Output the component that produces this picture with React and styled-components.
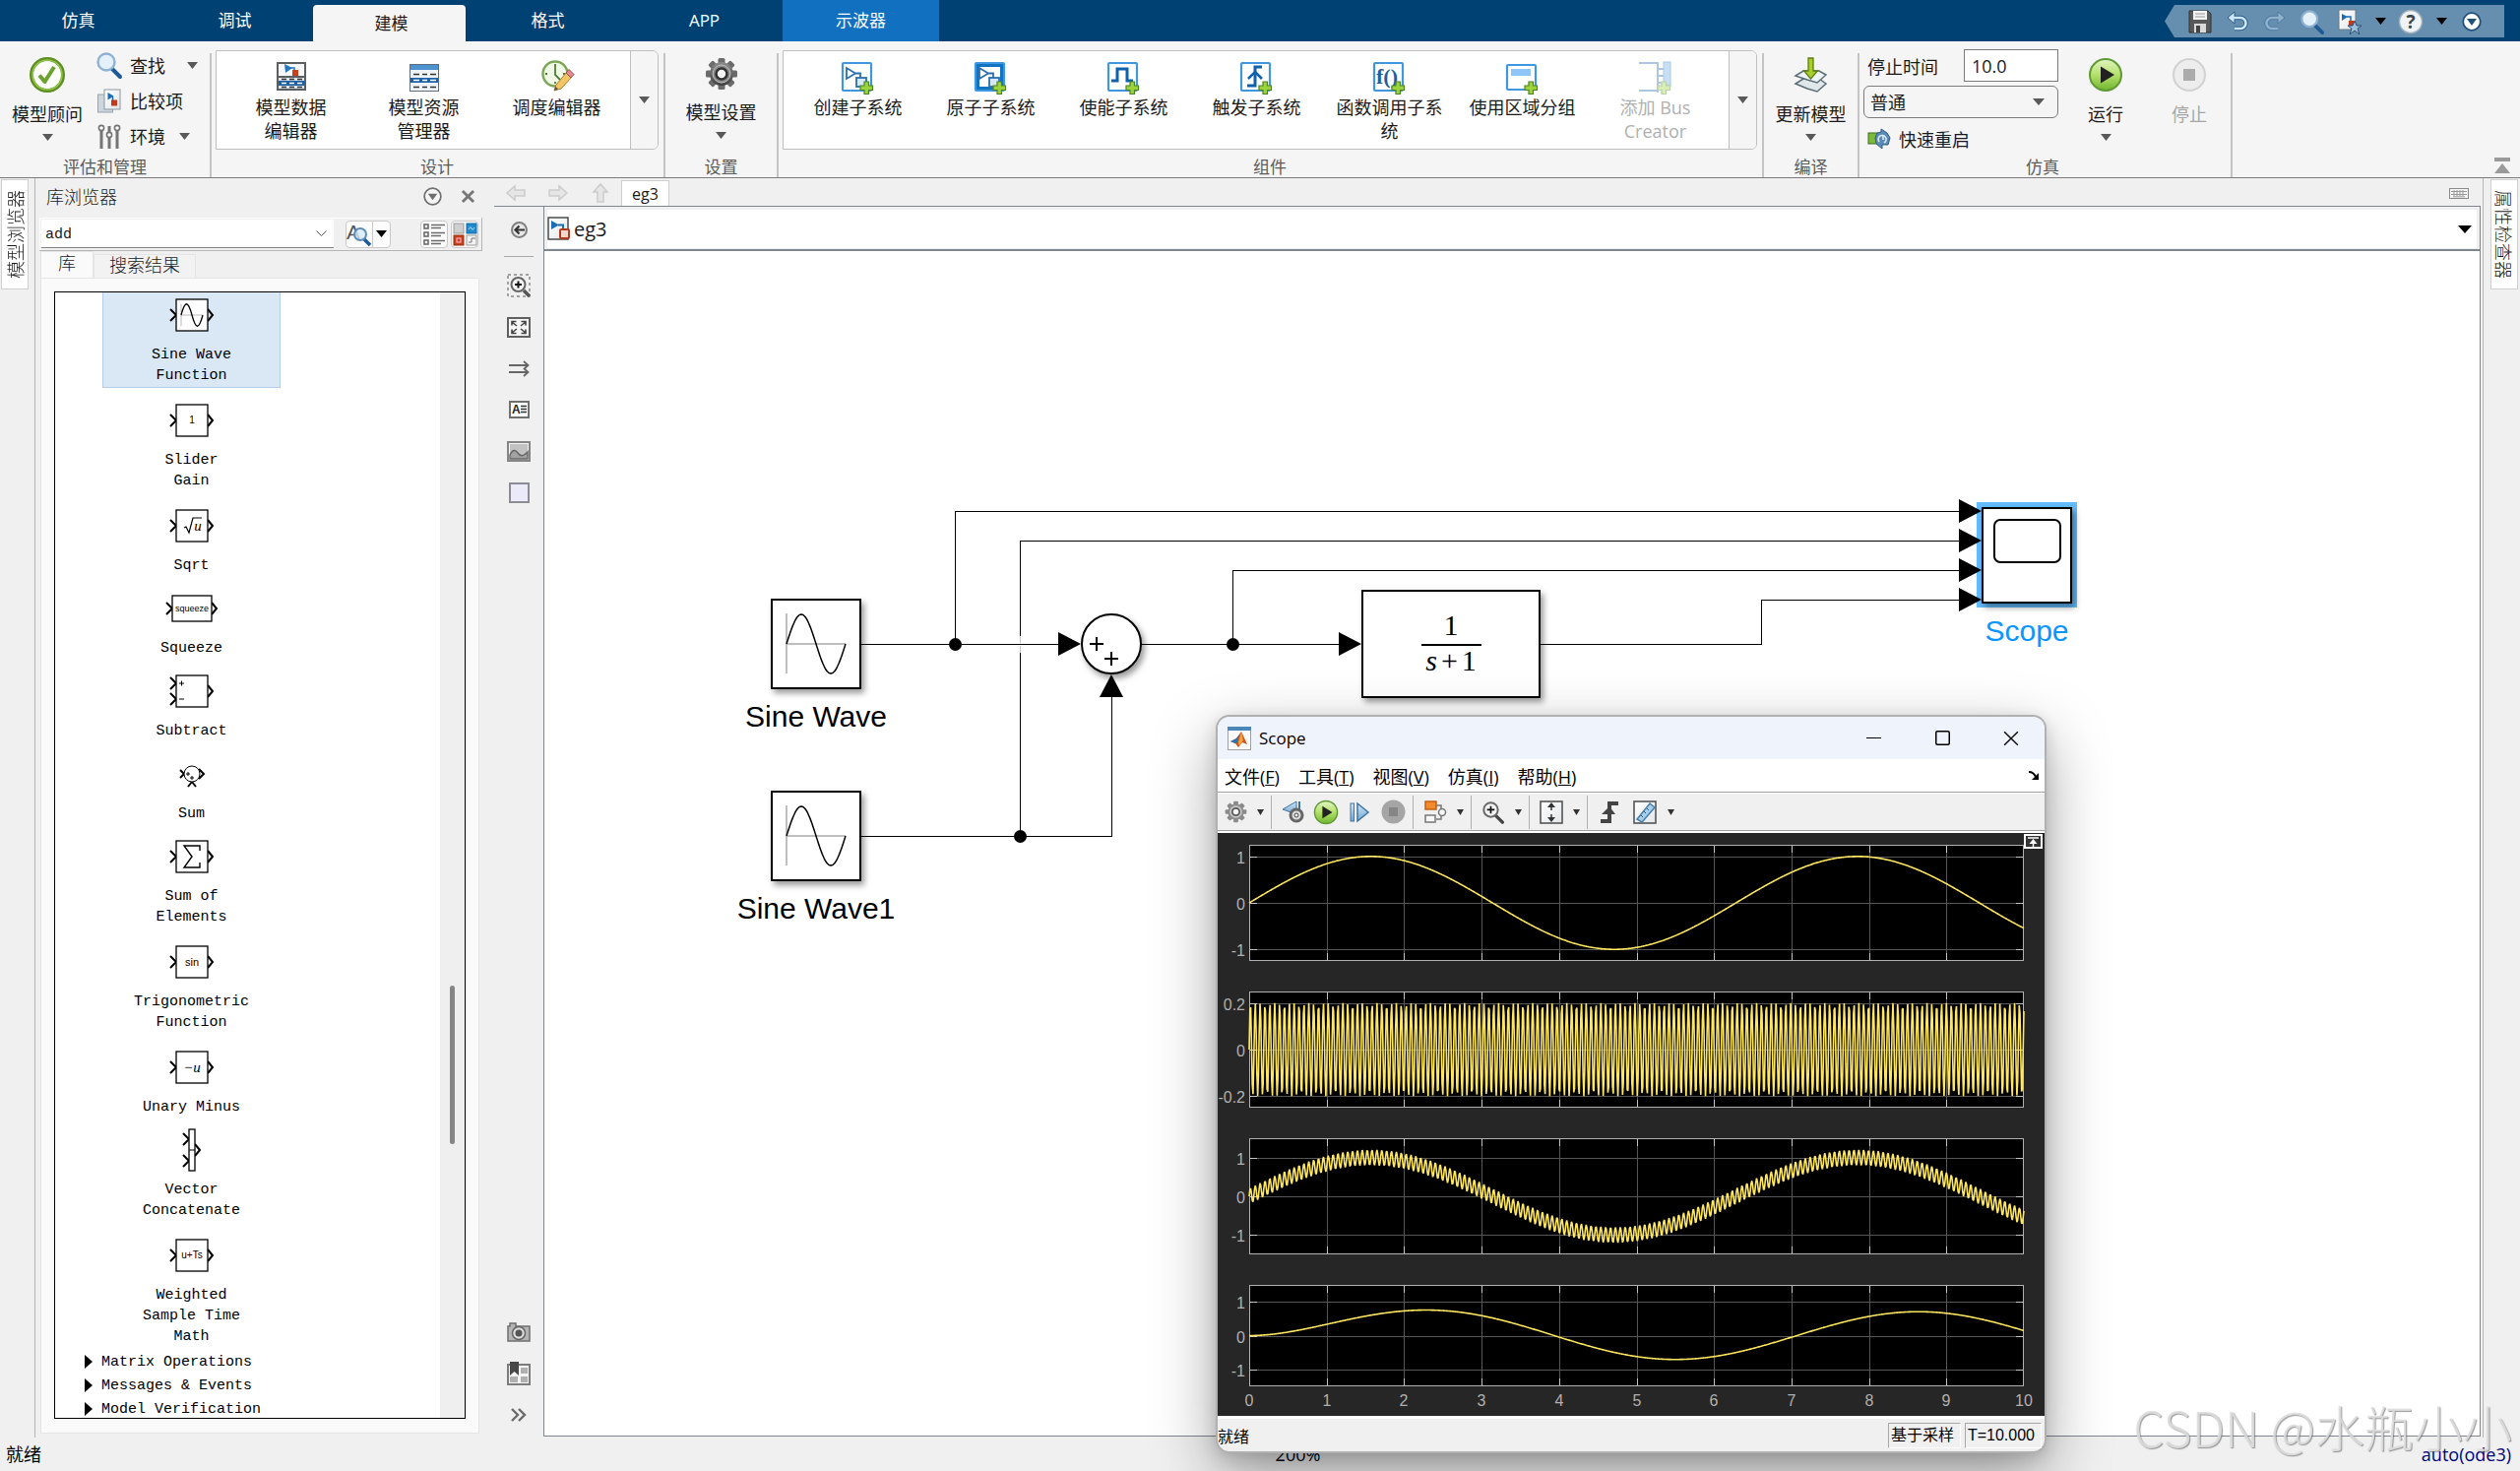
import React from "react";
import styled, { createGlobalStyle, css } from "styled-components";

const UI = `"Open Sans", "Noto Sans CJK SC", sans-serif`;
const SONG = `"Liberation Mono", "Noto Sans CJK SC", monospace`;
const ARIAL = `"Liberation Sans", "Noto Sans CJK SC", sans-serif`;

const Global = createGlobalStyle`
  *, *::before, *::after { box-sizing: border-box; }
  body { margin: 0; background: #f0f0f0; font-family: ${UI}; color: #1a1a1a; }
  button, input, select { font: inherit; color: inherit; margin: 0; }
  button { background: none; border: 0; padding: 0; cursor: default; }
  svg { display: block; flex: none; overflow: visible; }
`;

const App_ = styled.div`
  display: flex;
  flex-direction: column;
  min-height: 100vh;
  overflow: hidden;
  position: relative;
`;

/* ---------- title strip ---------- */
const TitleBar = styled.header`
  display: flex;
  height: 42px;
  background: #004173;
`;
const TitleTabs = styled.nav`
  display: flex;
  flex: 1;
`;
const TitleTab = styled.button`
  width: 159px;
  color: #fff;
  font-size: 17px;
  line-height: 42px;
  ${(p) => p.$active && css`
    background: #f5f5f5;
    color: #1a1a1a;
    width: 155px;
    margin: 5px 4px 0 0;
    padding-left: 4px;
    line-height: 32px;
    border-radius: 4px 4px 0 0;
  `}
  ${(p) => p.$context && css`background: #1170bf;`}
`;
const QuickBar = styled.div`
  display: flex;
  align-items: center;
  align-self: flex-start;
  height: 33px;
  margin: 5px 16px 0 0;
  padding: 0 14px 0 17px;
  background: #668eaf;
  clip-path: polygon(0 50%, 10px 0, 100% 0, 100% 100%, 10px 100%);
`;
const QuickButton = styled.button`
  display: flex;
  justify-content: center;
  width: ${(p) => (p.$narrow ? 24 : 38)}px;
`;

/* ---------- ribbon ---------- */
const Ribbon = styled.section`
  display: flex;
  height: 139px;
  background: #f5f5f5;
  border-bottom: 1px solid #7c7a7d;
`;
const Group = styled.div`
  display: flex;
  flex-direction: column;
  padding: ${(p) => p.$pad || "0"};
`;
const GroupBody = styled.div`
  display: flex;
  flex: 1;
  align-items: flex-start;
`;
const GroupLabel = styled.div`
  height: 20px;
  line-height: 20px;
  font-size: 17px;
  color: #5c5c5c;
  text-align: center;
`;
const Divider = styled.div`
  width: 2px;
  margin-top: 12px;
  background: #c4c4c4;
`;
const LargeButton = styled.button`
  display: flex;
  flex-direction: column;
  align-items: center;
  width: ${(p) => p.$w}px;
  padding-top: 16px;
  font-size: 18px;
  line-height: 24px;
  color: ${(p) => (p.disabled ? "#a6a6a6" : "#1a1a1a")};
  svg + span { margin: 10px 0 8px; }
`;
const SmallColumn = styled.div`
  display: flex;
  flex-direction: column;
  width: 117px;
  padding: 6px 0 0 2px;
`;
const SmallButton = styled.button`
  display: flex;
  align-items: center;
  gap: 8px;
  height: 36px;
  font-size: 18px;
  svg:first-child { width: 26px; }
  span + svg { margin-left: ${(p) => p.$gap || 6}px; }
`;
const Gallery = styled.div`
  display: flex;
  height: 101px;
  margin-top: 9px;
  padding-left: 8px;
  background: #fff;
  border: 1px solid #bfbfbf;
  border-radius: 0 6px 6px 0;
`;
const GalleryItem = styled.button`
  display: flex;
  flex-direction: column;
  align-items: center;
  width: 135px;
  padding: 9px 8px 0;
  font-size: 18px;
  line-height: 24px;
  white-space: pre-line;
  color: ${(p) => (p.disabled ? "#b0b0b0" : "#1a1a1a")};
`;
const GalleryMore = styled.button`
  display: flex;
  align-items: center;
  justify-content: center;
  width: 28px;
  margin-left: 7px;
  background: #f5f5f5;
  border-left: 1px solid #bfbfbf;
  border-radius: 0 5px 5px 0;
`;
const Fields = styled.div`
  display: flex;
  flex-direction: column;
  gap: 4px;
  width: 202px;
  padding: 8px 0 0 4px;
  font-size: 18px;
`;
const FieldRow = styled.div`
  display: flex;
  align-items: center;
  gap: 8px;
  height: 33px;
  padding-left: 4px;
  justify-content: ${(p) => (p.$spread ? "space-between" : "flex-start")};
`;
const StopInput = styled.input`
  width: 96px;
  height: 33px;
  padding: 0 7px;
  border: 1px solid #7c7a7d;
  background: #fff;
`;
const ModeBox = styled.div`
  display: grid;
  align-items: center;
  select, svg { grid-area: 1 / 1; }
  select {
    appearance: none;
    height: 33px;
    padding: 0 6px;
    border: 1px solid #7c7a7d;
    border-radius: 6px;
    background: #f5f5f5;
  }
  svg { justify-self: end; margin-right: 14px; pointer-events: none; }
`;
const RibbonEnd = styled.div`
  display: flex;
  flex: 1;
  justify-content: flex-end;
  align-items: flex-end;
  padding: 0 10px 4px 0;
`;

/* ---------- docked body ---------- */
const Main = styled.main`
  display: flex;
  flex: 1;
`;
const SideStrip = styled.aside`
  width: ${(p) => (p.$right ? 38 : 36)}px;
  padding: ${(p) => (p.$right ? "1px 2px 0 7px" : "1px 7px 0 1px")};
  border: solid #b5b5b5;
  border-width: ${(p) => (p.$right ? "0 0 0 1px" : "0 1px 0 0")};
`;
const SideTab = styled.button`
  display: flex;
  align-items: center;
  justify-content: center;
  width: 28px;
  height: 112px;
  background: #fff;
  border: 1px solid #cfcfcf;
  font-family: ${SONG};
  font-size: 18px;
  font-weight: 300;
  writing-mode: vertical-rl;
  text-orientation: sideways;
  transform: ${(p) => (p.$flip ? "rotate(180deg)" : "none")};
`;
const Library = styled.section`
  display: flex;
  flex-direction: column;
  width: 466px;
  padding: 0 12px 4px 4px;
  font-family: ${SONG};
`;
const LibraryHead = styled.div`
  display: flex;
  align-items: center;
  gap: 20px;
  height: 40px;
  padding: 0 8px 4px 7px;
  h2 { flex: 1; margin: 0; font-size: 18px; font-weight: 300; }
`;
const SearchRow = styled.div`
  display: flex;
  align-items: center;
  height: 34px;
  padding: 0 3px 0 2px;
  border: 1px solid #b5b5b5;
  border-width: 0 1px 1px 0;
  box-shadow: inset 1px 1px #fff;
`;
const Combo = styled.div`
  display: flex;
  align-items: center;
  flex: 1;
  height: 29px;
  padding-right: 7px;
  background: #fff;
  border-bottom: 1px solid #858585;
  input {
    flex: 1;
    min-width: 0;
    border: 0;
    padding: 3px 4px 0;
    font-size: 15px;
    background: none;
  }
`;
const FramedButton = styled.button`
  display: flex;
  align-items: center;
  justify-content: center;
  width: ${(p) => p.$w}px;
  height: 28px;
  margin-left: ${(p) => p.$ml}px;
  background: #fcfcfc;
  border: 1px solid #c9c9c9;
  border-radius: ${(p) => p.$r || "4px"};
`;
const LibTabs = styled.div`
  display: flex;
  align-items: flex-end;
  height: 27px;
  padding-left: 1px;
  font-size: 18px;
  font-weight: 300;
  button {
    height: 24px;
    line-height: 24px;
    padding: 0 15px;
    border: 1px solid #e5e5e5;
    border-bottom: 0;
    background: #f2f2f2;
  }
  button[aria-selected="true"] { height: 27px; background: #fafafa; padding: 0 17px; }
`;
const LibBody = styled.div`
  display: flex;
  flex: 1;
  contain: size;
  padding: 13px 13px 14px 13px;
  margin: 0 3px 0 1px;
  background: #fafafa;
  border: 1px solid #e5e5e5;
`;
const LibList = styled.div`
  display: flex;
  flex: 1;
  border: 1px solid #000;
  background: #fff;
  overflow: hidden;
`;
const LibItems = styled.div`
  flex: 1;
  margin-top: -10px;
`;
const LibItem = styled.button`
  display: flex;
  flex-direction: column;
  align-items: center;
  gap: 7px;
  width: 181px;
  height: ${(p) => ({ 1: 84, 2: 107, 3: 129 })[p.$lines]}px;
  margin-left: 48px;
  padding-top: 10px;
  font-size: 15px;
  line-height: 21px;
  white-space: pre-line;
  color: #000;
  ${(p) => p.$selected && css`
    background: #dae8f5;
    box-shadow: inset 0 0 0 1px #b5cfe8;
  `}
`;
const LibNode = styled.button`
  display: flex;
  align-items: center;
  gap: 9px;
  height: 24px;
  margin-left: 30px;
  font-size: 15px;
  color: #000;
`;
const ScrollTrack = styled.div`
  width: 25px;
  padding: 704px 9px 0 10px;
  background: #efefef;
`;
const ScrollThumb = styled.div`
  width: 5px;
  height: 161px;
  border-radius: 3px;
  background: #858585;
`;

const Editor = styled.section`
  display: flex;
  flex-direction: column;
  flex: 1;
  margin-right: 2px;
`;
const NavRow = styled.div`
  display: flex;
  align-items: flex-end;
  height: 29px;
  border-bottom: 1px solid #808690;
`;
const NavButton = styled.button`
  display: flex;
  align-items: center;
  justify-content: center;
  width: 43px;
  height: 26px;
`;
const DocTab = styled.button`
  width: 49px;
  height: 26px;
  background: #fff;
  border: 1px solid #cfcfcf;
  border-bottom: 0;
  font-size: 16px;
  line-height: 26px;
`;
const KeyboardButton = styled.button`
  margin: 0 12px 7px auto;
`;
const EditorBody = styled.div`
  display: flex;
  flex: 1;
`;
const Palette = styled.div`
  display: flex;
  flex-direction: column;
  align-items: center;
  width: 50px;
  padding: 2px 0;
  hr { width: 30px; height: 1px; margin: 6px 0 8px; border: 0; background: #a8a8a8; }
`;
const PaletteButton = styled.button`
  display: flex;
  align-items: center;
  justify-content: center;
  width: 42px;
  height: 42px;
`;
const Spacer = styled.div`flex: 1;`;
const CanvasFrame = styled.div`
  display: flex;
  flex-direction: column;
  flex: 1;
  margin-bottom: 1px;
  border: 1px solid #808690;
  border-top: 0;
`;
const AddressBar = styled.div`
  height: 45px;
  padding: 3px;
  background: #f0f0f0;
  border-bottom: 2px solid #808690;
`;
const Address = styled.div`
  display: flex;
  align-items: center;
  gap: 3px;
  height: 39px;
  padding-right: 5px;
  background: #fff;
  font-size: 20px;
  span { flex: 1; }
`;
const Canvas = styled.div`
  flex: 1;
  position: relative;
  background: #fff;
`;

/* ---------- status bar and watermark ---------- */
const StatusBar = styled.footer`
  display: grid;
  grid-template-columns: 1fr auto 1fr;
  height: 34px;
  line-height: 34px;
  padding: 0 9px 0 6px;
  font-size: 18px;
  color: #000;
  span:nth-child(2) { margin-left: 80px; }
  a { justify-self: end; color: #000080; text-decoration: none; }
`;
const Watermark = styled.div`
  position: absolute;
  right: 8px;
  bottom: 9px;
  font: 300 50px/74px "Noto Sans CJK SC", sans-serif;
  color: rgba(222, 222, 222, 0.9);
  text-shadow: 1px 1px 1px rgba(90, 90, 90, 0.6);
  white-space: nowrap;
  pointer-events: none;
`;

/* ---------- scope window ---------- */
const Window = styled.section`
  position: absolute;
  left: 682px;
  top: 471px;
  z-index: 2;
  width: 844px;
  border: 2px solid #b0b0b0;
  border-radius: 14px;
  background: #f0f0f0;
  overflow: hidden;
  box-shadow: 0 4px 16px rgba(0, 0, 0, 0.14), 0 24px 64px rgba(0, 0, 0, 0.36);
`;
const WinTitle = styled.div`
  display: flex;
  align-items: center;
  height: 43px;
  padding: 0 9px 0 10px;
  background: #eff3fb;
  font-size: 17px;
  h3 { flex: 1; margin: 0 0 0 8px; font: inherit; color: #000; }
`;
const WinButton = styled.button`
  display: flex;
  justify-content: center;
  width: 70px;
  &:last-child { margin-right: -10px; }
`;
const MenuBar = styled.div`
  display: flex;
  align-items: center;
  gap: 19px;
  height: 34px;
  padding: 0 6px 0 7px;
  background: #fff;
  border-bottom: 1px solid #a0a0a0;
  font-size: 18px;
  color: #000;
  svg { margin-left: auto; }
`;
const WinTools = styled.div`
  display: flex;
  align-items: center;
  height: 41px;
  padding-left: 2px;
  border-bottom: 2px solid #fff;
  box-shadow: inset 0 1px #fff, inset 0 -1px #a0a0a0;
`;
const Tool = styled.button`
  display: flex;
  align-items: center;
  justify-content: center;
  width: ${(p) => p.$w || 34}px;
  height: 32px;
`;
const ToolSep = styled.div`
  width: 1px;
  height: 34px;
  margin: 0 5px 0 3px;
  background: #b0b0b0;
`;
const Plots = styled.div`
  position: relative;
  display: flex;
  flex-direction: column;
  gap: 31px;
  padding: 12px 21px 30px 32px;
  background: #262626;
`;
const MaxAxes = styled.button`
  position: absolute;
  right: 2px;
  top: 1px;
`;
const WinStatus = styled.div`
  display: flex;
  align-items: center;
  gap: 4px;
  height: 36px;
  padding-right: 3px;
  border-top: 3px solid #fff;
  font: 16px ${ARIAL};
  color: #000;
  span:first-child { flex: 1; }
`;
const StatusCell = styled.span`
  height: 26px;
  line-height: 24px;
  padding: 0 6px 0 2px;
  border: 1px solid;
  border-color: #a8a8a8 #fff #fff #a8a8a8;
`;

/* ---------- shared drawings ---------- */
const Hidden = styled.svg`
  position: absolute;
`;
const Defs = () => (
  <Hidden width="0" height="0" aria-hidden="true">
    <defs>
      <linearGradient id="gGreen" x1="0" y1="0" x2="0" y2="1"><stop offset="0" stopColor="#e2f5c4" /><stop offset=".5" stopColor="#b4e06a" /><stop offset="1" stopColor="#6fb52e" /></linearGradient>
      <linearGradient id="gDark" x1="0" y1="0" x2="0" y2="1"><stop offset="0" stopColor="#8c8c8c" /><stop offset="1" stopColor="#404040" /></linearGradient>
      <linearGradient id="gBlue" x1="0" y1="0" x2="0" y2="1"><stop offset="0" stopColor="#d3e8f7" /><stop offset="1" stopColor="#6fa6d2" /></linearGradient>
      <linearGradient id="gPage" x1="0" y1="0" x2="1" y2="1"><stop offset="0" stopColor="#ffffff" /><stop offset="1" stopColor="#e2e7eb" /></linearGradient>
    </defs>
  </Hidden>
);
const Caret = ({ w = 11, h = 7, c = "#595959" }) => (
  <svg width={w} height={h} viewBox="0 0 10 6" preserveAspectRatio="none"><path d="M0 0H10L5 6Z" fill={c} /></svg>
);
const Lens = ({ size = 26, dark }) => (
  <svg width={size} height={size} viewBox="0 0 26 26">
    <path d="M16 17L24 25" stroke={dark ? "#454545" : "#1d5a96"} strokeWidth="4" strokeLinecap="round" />
    <circle cx="10" cy="10" r="8.500" fill={dark ? "#f4f4f4" : "#e4f1fb"} stroke={dark ? "#6b6b6b" : "#8eb2d3"} strokeWidth="2.400" />
    {dark && <path d="M5.500 10h9M10 5.500v9" stroke="#111" strokeWidth="2" />}
  </svg>
);
const Gear = ({ size = 34, light }) => (
  <svg width={size} height={size} viewBox="-17 -17 34 34">
    {[0, 45, 90, 135, 180, 225, 270, 315].map((a) => (
      <rect key={a} x="-3.500" y="-16" width="7" height="8" rx="1.500" fill={light ? "#8a8a8a" : "#6b6b6b"} transform={`rotate(${a})`} />
    ))}
    <circle r="12" fill={light ? "#8a8a8a" : "url(#gDark)"} />
    <circle r="9" fill={light ? "#c9c9c9" : "#8b8b8b"} stroke="#bdbdbd" strokeWidth="1" />
    <circle r="5.500" fill="#f4f4f4" stroke={light ? "#5c5c5c" : "#333"} strokeWidth="2.600" />
  </svg>
);
const CheckIcon = () => (
  <svg width="36" height="36" viewBox="0 0 36 36">
    <circle cx="18" cy="18" r="16" fill="#fcfdf8" stroke="#5d8c22" strokeWidth="4" />
    <circle cx="18" cy="18" r="15" fill="none" stroke="#93c94b" strokeWidth="1.500" />
    <path d="M10 18.500L15.500 25L25 10" fill="none" stroke="#6aa12f" strokeWidth="4" strokeLinejoin="round" />
  </svg>
);
const CompareIcon = () => (
  <svg width="25" height="25" viewBox="0 0 25 25">
    <rect x="1" y="6" width="15" height="18" fill="#cdd6dc" stroke="#96a2ac" />
    <rect x="7.500" y="1" width="16" height="20" fill="url(#gPage)" stroke="#8c979f" />
    <path d="M11 4l6 3.500l-6 4z" fill="#1c6bb5" /><path d="M16 8v4" stroke="#1c6bb5" strokeWidth="1.500" />
    <rect x="14.500" y="11.500" width="6" height="6" fill="#c2391b" />
  </svg>
);
const SlidersIcon = () => (
  <svg width="24" height="25" viewBox="0 0 24 25" fill="#fff" stroke="#757575">
    <path d="M4 7V25M12 13V25M20 7V25M12 2V9" strokeWidth="3" />
    <circle cx="4" cy="4" r="2.600" strokeWidth="1.600" /><circle cx="12" cy="11" r="2.600" strokeWidth="1.600" /><circle cx="20" cy="4" r="2.600" strokeWidth="1.600" />
  </svg>
);
const DataEditorIcon = () => (
  <svg width="36" height="36" viewBox="0 0 36 36">
    <rect x="3" y="2" width="30" height="29" fill="#5a5f63" />
    <rect x="5" y="4" width="26" height="12" fill="#f6f8fa" />
    <path d="M11 4l8 4l-7 5z" fill="#2277c0" /><path d="M17 8h4v3" stroke="#2277c0" fill="none" strokeWidth="1.500" /><rect x="19" y="10" width="6" height="6" fill="#c8401e" />
    <rect x="5" y="18" width="26" height="11" fill="#dfe6eb" />
    <rect x="5" y="21" width="26" height="5" fill="#1d62a8" />
    <path d="M8 19.500h5m3 0h5m3 0h5M8 27.500h5m3 0h5m3 0h5" stroke="#333" strokeWidth="1.300" />
    <path d="M8 23.500h5m3 0h5m3 0h5" stroke="#fff" strokeWidth="1.500" />
  </svg>
);
const ResourceIcon = () => (
  <svg width="36" height="36" viewBox="0 0 36 36">
    <rect x="3.500" y="4.500" width="29" height="27" fill="#eef3f7" stroke="#5b6d7c" />
    <rect x="4" y="5" width="28" height="5" fill="#4d93d0" />
    <rect x="4" y="18" width="28" height="5" fill="#1d62a8" />
    <path d="M7 14.500h6m3 0h5m3 0h6M7 27.500h6m3 0h5m3 0h6" stroke="#333" strokeWidth="1.600" />
    <path d="M7 20.500h6m3 0h5m3 0h6" stroke="#fff" strokeWidth="1.600" />
  </svg>
);
const ScheduleIcon = () => (
  <svg width="36" height="36" viewBox="0 0 36 36">
    <circle cx="16" cy="14" r="12.500" fill="#eff9e6" stroke="#7ba757" strokeWidth="2.400" />
    <path d="M16 4v11l5 5M16 24v-2M6 14h2M24 14h2" stroke="#4f7a35" strokeWidth="1.800" fill="none" />
    <path d="M17 25L28 12L33 17L22 29L15 31Z" fill="#f3c663" stroke="#a87c2c" />
    <path d="M27 13l3-3.500l5 5l-3 3.500z" fill="#e58a90" stroke="#a34a55" /><path d="M15 31l1.500-4l2.500 2.500z" fill="#553" />
  </svg>
);
const Plus = () => (
  <path d="M24 22h4.500v4h4v4.500h-4v4h-4.500v-4h-4v-4.500h4z" fill="#9bd33c" stroke="#4d8422" strokeWidth="1.200" />
);
const subDrawings = {
  sub: <g fill="none" stroke="#2b6fae" strokeWidth="1.800"><path d="M6 8v11l9-5.500zM15 13.500h5V18" /><rect x="16" y="18" width="10" height="9" fill="#d6e8f8" /></g>,
  enable: <path d="M5 21h6V9h10v12h6" fill="none" stroke="#0e62ab" strokeWidth="3" />,
  trigger: <g fill="none" stroke="#0e62ab" strokeWidth="3"><path d="M8 26h8V7h7" /><path d="M9 19l7-7l7 7" strokeWidth="2.600" /></g>,
  func: <text x="4" y="24" fontFamily="Liberation Serif, serif" fontWeight="bold" fontSize="22" fill="#1b5f9f">f()</text>,
  region: <rect x="6" y="9" width="20" height="7" fill="#8fc6f7" />,
};
const SubIcon = ({ kind, atomic }) => (
  <svg width="36" height="36" viewBox="0 0 36 36">
    <rect x="2" y={kind === "region" ? 5 : 3} width="29" height={kind === "region" ? 25 : 28} rx="1" fill="#fff" stroke="#3f97e0" strokeWidth="2.200" />
    {atomic && <rect x="4.500" y="5.500" width="24" height="23" fill="#fff" stroke="#1173c4" strokeWidth="3" />}
    {subDrawings[kind]}
    <Plus />
  </svg>
);
const BusIcon = () => (
  <svg width="36" height="36" viewBox="0 0 36 36" opacity=".38">
    <path d="M1 3h18M1 31h18M20 2v31M20 9h7M20 16h7M20 23h7" fill="none" stroke="#2b6fae" strokeWidth="2" />
    <rect x="26" y="2" width="7" height="24" fill="#6fb0e8" stroke="#2b6fae" />
    <Plus />
  </svg>
);
const UpdateIcon = () => (
  <svg width="36" height="36" viewBox="0 0 36 36">
    <path d="M2 27l8-5h16l7 5l-9 8l-10-3z" fill="#dfe7ea" stroke="#5c6f78" strokeWidth="1.500" />
    <path d="M2 19l8-5h16l7 4l-9 8l-10-3z" fill="#eef3f5" stroke="#5c6f78" strokeWidth="1.500" />
    <path d="M15 1h5v13h4.500l-7 8l-7-8H15z" fill="#a7cf2a" stroke="#5f7d16" strokeWidth="1.300" />
  </svg>
);
const Play = ({ size = 36 }) => (
  <svg width={size} height={size} viewBox="0 0 36 36">
    <circle cx="18" cy="18" r="16" fill="url(#gGreen)" stroke="#5f9a34" strokeWidth="2" />
    <path d="M13 9.500L27 18L13 26.500Z" fill="#222" />
  </svg>
);
const StopIcon = () => (
  <svg width="36" height="36" viewBox="0 0 36 36">
    <circle cx="18" cy="18" r="16" fill="#ededed" stroke="#d2d2d2" strokeWidth="2" /><rect x="12" y="12" width="12" height="12" fill="#ababab" />
  </svg>
);
const RestartIcon = () => (
  <svg width="24" height="22" viewBox="0 0 24 22">
    <rect x="1" y="5" width="9" height="11" fill="#7cba3a" stroke="#3c6e1f" />
    <path d="M14 1l6 4l3 5l-2 7l-6 0v4l-6-5l-1-6l2-5l4-1z" fill="#5b8cb8" stroke="#315c82" /><path d="M12 14a4 4 0 1 1 5 1M16 8v4" fill="none" stroke="#dcebf6" strokeWidth="1.600" />
  </svg>
);
const SaveIcon = () => (
  <svg width="24" height="24" viewBox="0 0 24 24">
    <path d="M1 1h19l3 3v19H1z" fill="#595959" stroke="#333" /><rect x="5" y="1" width="14" height="9" fill="#f3f3f3" /><path d="M7 4h10M7 7h10" stroke="#999" />
    <rect x="6" y="14" width="12" height="9" fill="#d9d9d9" /><rect x="8" y="16" width="4" height="7" fill="#444" />
  </svg>
);
const UndoIcon = ({ redo }) => (
  <svg width="22" height="20" viewBox="0 0 22 20" opacity={redo ? 0.4 : 1}>
    <g transform={redo ? "translate(22 0) scale(-1 1)" : undefined}>
      <path d="M5 6h9a5.500 5.500 0 0 1 0 11H8" fill="none" stroke="#2a5f8e" strokeWidth="4.500" />
      <path d="M8 0L1 6l7 6z" fill="#cfe6f6" stroke="#2a5f8e" strokeWidth="1" />
      <path d="M5 6h9a5.500 5.500 0 0 1 0 11H8" fill="none" stroke="#cfe6f6" strokeWidth="2.600" />
    </g>
  </svg>
);
const FavIcon = () => (
  <svg width="24" height="26" viewBox="0 0 24 26">
    <rect x="1" y="1" width="17" height="20" fill="url(#gPage)" stroke="#6d7a85" /><path d="M4 5l6 3l-6 4z" fill="#1c6bb5" /><path d="M9 8h4v4" fill="none" stroke="#1c6bb5" strokeWidth="1.500" />
    <rect x="11" y="12" width="5" height="6" fill="#c2391b" /><path d="M17 12l2 5h5l-4 3l2 6l-5-4l-5 4l2-6l-4-3h5z" fill="#9fc1de" stroke="#2d4f74" />
  </svg>
);
const HelpIcon = () => (
  <svg width="26" height="26" viewBox="0 0 26 26"><circle cx="13" cy="13" r="11.500" fill="#f0f3f5" stroke="#9fb0bd" strokeWidth="1.500" /><text x="13" y="20" textAnchor="middle" fontFamily="Open Sans, sans-serif" fontWeight="bold" fontSize="19" fill="#3a4650">?</text></svg>
);
const CircleDown = ({ size = 20, c = "#20507c", bg = "#fff" }) => (
  <svg width={size} height={size} viewBox="0 0 20 20"><circle cx="10" cy="10" r="8.800" fill={bg} stroke={c} strokeWidth="1.800" /><path d="M5 7h10L10 14z" fill={c} /></svg>
);
const CollapseIcon = () => (
  <svg width="16" height="16" viewBox="0 0 16 16" fill="#9a9a9a"><rect width="16" height="4" /><path d="M8 6l8 10H0z" /></svg>
);
const CloseX = ({ s = 13, c = "#777", w = 3 }) => (
  <svg width={s} height={s} viewBox="0 0 14 14"><path d="M1 1L13 13M13 1L1 13" stroke={c} strokeWidth={w} /></svg>
);
const NavArrow = ({ r }) => (
  <svg width="20" height="16" viewBox="0 0 20 16"><path transform={`rotate(${r} 10 8)`} d="M9 1L1 8l8 7v-4h10V5H9z" fill="#e6e6e6" stroke="#cccccc" strokeWidth="1.500" /></svg>
);
const KeyboardIcon = () => (
  <svg width="20" height="11" viewBox="0 0 20 11"><rect x=".5" y=".5" width="19" height="10" fill="#f5f5f5" stroke="#8a8a8a" /><path d="M2 3.500h16M2 6.500h16M4 8.800h12M5 2v6M8 2v6M11 2v6M14 2v6" stroke="#999" /></svg>
);
const ModelIcon = () => (
  <svg width="24" height="25" viewBox="0 0 24 25">
    <rect x="1" y="1" width="20" height="22" fill="url(#gPage)" stroke="#4b4b4b" strokeWidth="1.500" />
    <path d="M4 4l8 4.500l-8 4.500z" fill="#1c6bb5" /><path d="M11 8.500h5v4" fill="none" stroke="#1c6bb5" strokeWidth="2" /><rect x="13" y="13" width="9" height="9" rx="1" fill="#f4d5cb" stroke="#b33a1c" strokeWidth="2" />
  </svg>
);
const SearchAIcon = () => (
  <svg width="25" height="24" viewBox="0 0 25 24">
    <text x="-1" y="17" fontFamily="Liberation Sans, sans-serif" fontSize="21" fill="#555">A</text>
    <path d="M17 17l6 6" stroke="#1d5a96" strokeWidth="3.500" /><circle cx="13" cy="12" r="6" fill="#d8eaf8cc" stroke="#5b8dba" strokeWidth="2" />
  </svg>
);
const ListIcon = () => (
  <svg width="22" height="22" viewBox="0 0 22 22" fill="none" stroke="#6b6b6b" strokeWidth="1.600">
    {[1, 9, 17].map((y) => <g key={y}><rect x="1" y={y} width="4" height="4" /><path d={`M8 ${y + 0.5}h14M8 ${y + 3.5}h10`} /></g>)}
  </svg>
);
const GridIcon = () => (
  <svg width="25" height="24" viewBox="0 0 25 24">
    <rect x="1" y="1" width="10" height="10" fill="#cfcfcf" stroke="#999" /><rect x="14" y="1" width="10" height="10" fill="#1e8bd0" stroke="#1268a3" /><path d="M16 7q2-4 3-1t3-1" stroke="#bfe3fa" fill="none" />
    <rect x="1" y="13" width="10" height="10" fill="#c7411a" stroke="#96300f" /><rect x="4" y="16" width="4" height="4" fill="none" stroke="#fbd" />
    <rect x="14" y="13" width="10" height="10" fill="#f3f3f3" stroke="#999" /><path d="M16 20h3v-4h4" stroke="#777" fill="none" />
  </svg>
);

const paletteTop = [
  ["缩放", <svg width="25" height="25" viewBox="0 0 25 25"><rect x="1" y="1" width="22" height="22" fill="none" stroke="#888" strokeWidth="1.500" strokeDasharray="3 3" /><path d="M17 17l6 6" stroke="#555" strokeWidth="3.500" /><circle cx="11.500" cy="11" r="7" fill="#f4f4f4" stroke="#666" strokeWidth="2" /><path d="M8 11h7M11.500 7.500v7" stroke="#111" strokeWidth="2" /></svg>],
  ["适应视图", <svg width="24" height="21" viewBox="0 0 24 21"><rect x="1" y="1" width="22" height="19" fill="#f6f6f6" stroke="#606060" strokeWidth="2" /><path d="M10 9L5 5M5 8.500V4.500h4.500M14 9l5-4M14.500 4.500H19v4M10 12l-5 4M5 12.500v4h4.500M14 12l5 4M14.500 16.500H19v-4" fill="none" stroke="#444" strokeWidth="1.600" /></svg>],
  ["示例时间", <svg width="21" height="15" viewBox="0 0 21 15" fill="none" stroke="#666" strokeWidth="1.800"><path d="M0 4h19M15 0l4.500 4L15 8M0 11h19M15 7l4.500 4L15 15" /></svg>],
  ["注释", <svg width="21" height="18" viewBox="0 0 21 18"><rect x="1" y="1" width="19" height="16" fill="#fff" stroke="#707070" strokeWidth="2" /><text x="3" y="13" fontFamily="Liberation Sans, sans-serif" fontWeight="bold" fontSize="12" fill="#222">A</text><path d="M12 5.500h6M12 8.500h6M12 11.500h6" stroke="#333" strokeWidth="1.300" /></svg>],
  ["图像", <svg width="24" height="21" viewBox="0 0 24 21"><rect x="1" y="1" width="22" height="19" fill="#f4f4f4" stroke="#858585" strokeWidth="2" /><rect x="3" y="3" width="18" height="15" fill="#c2c2c2" /><path d="M3 14q4-8 8-2t10-1v7H3z" fill="#a2a2a2" stroke="#666" strokeWidth="1.400" /></svg>],
  ["区域", <svg width="21" height="21" viewBox="0 0 21 21"><rect x="1" y="1" width="19" height="19" fill="#eaeaf8" stroke="#8c8c96" strokeWidth="2" /></svg>],
];
const paletteBottom = [
  ["截图", <svg width="24" height="20" viewBox="0 0 24 20"><path d="M1 4h2V1h6v3h14v15H1z" fill="#b5b5b5" stroke="#6f6f6f" strokeWidth="1.500" /><circle cx="12" cy="11" r="6.500" fill="#ddd" stroke="#666" strokeWidth="1.500" /><circle cx="12" cy="11" r="3.500" fill="#555" /></svg>],
  ["视图标记", <svg width="24" height="24" viewBox="0 0 24 24"><rect x="1" y="3" width="22" height="20" fill="#f4f4f4" stroke="#7c7c7c" strokeWidth="2" /><rect x="14" y="6" width="7" height="6" fill="#b0b0b0" /><rect x="14" y="15" width="7" height="6" fill="#b0b0b0" /><rect x="3" y="15" width="8" height="6" fill="#b0b0b0" /><path d="M3 0h9v14l-4.500-4L3 14z" fill="#474747" /></svg>],
  ["更多", <svg width="16" height="14" viewBox="0 0 16 14" fill="none" stroke="#6b6b6b" strokeWidth="2.400"><path d="M1 1l6 6l-6 6M8 1l6 6l-6 6" /></svg>],
];

/* ---------- library block glyphs ---------- */
const BlockGlyph = ({ ports = [0], half = 16, tall = 16, children }) => (
  <svg width="60" height="46" viewBox="-30 -23 60 46" fill="none" stroke="#000">
    {ports.map((y) => <path key={y} d={`M${-half - 6} ${y - 6}L${-half} ${y}L${-half - 6} ${y + 6}`} strokeWidth="2" />)}
    <path d={`M${half} -6L${half + 5} 0L${half} 6`} strokeWidth="2" />
    <rect x={-half} y={-tall} width={half * 2} height={tall * 2} fill="#fff" strokeWidth="1.300" />
    {children}
  </svg>
);
const GlyphText = ({ size, children, serif, x = 0 }) => (
  <text x={x} y={size / 3} textAnchor="middle" stroke="none" fill="#000" fontSize={size} fontStyle={serif ? "italic" : "normal"} fontFamily={serif ? "Liberation Serif, serif" : "Liberation Sans, sans-serif"}>{children}</text>
);
const libItems = [
  ["Sine Wave\nFunction", 2, <BlockGlyph><path d="M-11 -11V11M-11 0H11" stroke="#bbb" /><path d="M-11 0C-7 -15 -4 -15 0 0S7 15 11 0" strokeWidth="1.300" /></BlockGlyph>],
  ["Slider\nGain", 2, <BlockGlyph><GlyphText size={10}>1</GlyphText></BlockGlyph>],
  ["Sqrt", 1, <BlockGlyph><path d="M-8 2l2-1l3 6L1 -8H10" strokeWidth="1.200" /><GlyphText size={15} serif x={6}>u</GlyphText></BlockGlyph>],
  ["Squeeze", 1, <BlockGlyph half={20} tall={13}><GlyphText size={9}>squeeze</GlyphText></BlockGlyph>],
  ["Subtract", 1, <BlockGlyph ports={[-8, 8]}><path d="M-13 -8h5M-10.500 -10.500v5M-13 8h5" /></BlockGlyph>],
  ["Sum", 1, <svg width="60" height="46" viewBox="-30 -23 60 46" fill="none" stroke="#000"><path d="M-12 -4L-8 0L-12 4M7 -5L12 0L7 5M-4 13L0 8L4 13" strokeWidth="2" /><circle r="8" fill="#fff" /><path d="M-6 0h4M-4 -2v4M-2 4h4M0 2v4" /></svg>],
  ["Sum of\nElements", 2, <BlockGlyph><path d="M8 -6V-11H-8L0 0L-8 11H8V6" strokeWidth="1.400" /></BlockGlyph>],
  ["Trigonometric\nFunction", 2, <BlockGlyph><GlyphText size={11}>sin</GlyphText></BlockGlyph>],
  ["Unary Minus", 1, <BlockGlyph><GlyphText size={15} serif>−u</GlyphText></BlockGlyph>],
  ["Vector\nConcatenate", 2, <BlockGlyph half={3} tall={21} ports={[-11, 11]}><path d="M-3 0h6" /></BlockGlyph>],
  ["Weighted\nSample Time\nMath", 3, <BlockGlyph><GlyphText size={10}>u+Ts</GlyphText></BlockGlyph>],
];
const libNodes = ["Matrix Operations", "Messages & Events", "Model Verification"];

/* ---------- block diagram ---------- */
const Diagram = styled.svg`
  .block { fill: #fff; stroke: #000; stroke-width: 2; filter: drop-shadow(3px 4px 3px rgba(0, 0, 0, 0.4)); }
  .wire { fill: none; stroke: #000; stroke-width: 1; shape-rendering: crispEdges; }
  text { font-family: "Liberation Sans", sans-serif; font-size: 30px; text-anchor: middle; }
  .math { font-family: "Liberation Serif", serif; }
`;
const sinePts = Array.from({ length: 61 }, (_, i) => `${799 + i},${(654 - 30 * Math.sin((i / 60) * 2 * Math.PI)).toFixed(2)}`).join(" ");
const SineBlock = ({ dy, name }) => (
  <g transform={`translate(0 ${dy})`}>
    <rect className="block" x="784" y="609" width="90" height="90" />
    <path d="M799 623V684M799 654H859" stroke="#bfbfbf" strokeWidth="2" />
    <polyline points={sinePts} fill="none" stroke="#000" strokeWidth="1.500" />
    <text x="829" y="738">{name}</text>
  </g>
);
const Arrow = ({ x, y }) => <path d={`M${x} ${y}l-23 -12v24z`} />;
const Model = () => (
  <Diagram width="1600" height="740" viewBox="553 255 1600 740">
    <g className="wire">
      <path d="M875 654.500H1078M1160 654.500H1362M970.500 654V519.500H1992" />
      <path d="M875 849.500H1129.500V706M1036.500 849V663M1036.500 646V549.500H1992" />
      <path d="M1036.500 663V656M1036.500 653V646" stroke="#c8c8c8" />
      <path d="M1252.500 654V579.500H1992M1565 654.500H1789.500V609.500H1992" />
    </g>
    <circle cx="970.500" cy="654.500" r="6.500" /><circle cx="1252.500" cy="654.500" r="6.500" /><circle cx="1036.500" cy="849.500" r="6.500" />
    <SineBlock dy={0} name="Sine Wave" />
    <SineBlock dy={195} name="Sine Wave1" />
    <circle className="block" cx="1129" cy="654" r="30" />
    <path d="M1107 654h14M1114 647v14M1122 669h14M1129 662v14" stroke="#000" strokeWidth="2" />
    <Arrow x={1098} y={654} />
    <path d="M1129 685l-12 23h24z" />
    <Arrow x={1383} y={654} />
    <rect className="block" x="1384" y="600" width="180" height="108" />
    <text className="math" x="1474" y="645">1</text>
    <path d="M1444 655H1505" stroke="#000" strokeWidth="2" />
    <text className="math" x="1474" y="681"><tspan fontStyle="italic">s</tspan><tspan dx="4">+</tspan><tspan dx="4">1</tspan></text>
    <rect x="2008" y="510" width="102" height="107" fill="#62bcfd" />
    <rect className="block" x="2014" y="516" width="90" height="96" />
    <rect x="2026" y="528" width="67" height="43" rx="6" fill="#fff" stroke="#000" strokeWidth="2" />
    {[519, 549, 579, 609].map((y) => <Arrow key={y} x={2013} y={y} />)}
    <text x="2059" y="651" fill="#0a95ff">Scope</text>
  </Diagram>
);

/* ---------- scope plots ---------- */
const PlotSvg = styled.svg`
  width: 100%;
  text { font: 16px "Liberation Sans", sans-serif; fill: #b0b0b0; }
`;
const W = 787;
const Axes = ({ h, range, ticks, f, showTime }) => {
  const y = (v) => h / 2 - (v / range) * (h / 2);
  const pts = Array.from({ length: 1001 }, (_, i) => `${((i / 1000) * W).toFixed(2)},${y(f(i / 100)).toFixed(2)}`).join(" ");
  const xs = [1, 2, 3, 4, 5, 6, 7, 8, 9].map((n) => Math.round((n * W) / 10) + 0.5);
  return (
    <PlotSvg height={h} viewBox={`0 0 ${W} ${h}`}>
      <rect width={W} height={h} fill="#000" />
      <g shapeRendering="crispEdges" fill="none">
        <path stroke="#575757" d={xs.map((x) => `M${x} 0V${h}`).join("") + ticks.map((t) => `M0 ${Math.round(y(t))}.5H${W}`).join("")} />
        <path stroke="#c4c4c4" d={xs.map((x) => `M${x} 0v8M${x} ${h}v-8`).join("") + ticks.map((t) => `M0 ${Math.round(y(t))}.5h8M${W} ${Math.round(y(t))}.5h-8`).join("")} />
        <rect x=".5" y=".5" width={W - 1} height={h - 1} stroke="#b0b0b0" />
      </g>
      <polyline points={pts} fill="none" stroke="#ffe85f" strokeWidth="1.600" strokeLinejoin="bevel" />
      {ticks.map((t) => <text key={t} x="-4" y={Math.round(y(t)) + 7} textAnchor="end">{t}</text>)}
      {showTime && Array.from({ length: 11 }, (_, n) => <text key={n} x={Math.round((n * W) / 10)} y={h + 20} textAnchor="middle">{n}</text>)}
    </PlotSvg>
  );
};
const noise = (t) => 0.2 * Math.sin(100 * t);
const ToolCaret = () => <Caret w={7} h={6} c="#333" />;

const ScopeWindow = () => (
  <Window>
    <WinTitle>
      <svg width="24" height="24" viewBox="0 0 24 24"><rect x=".5" y=".5" width="23" height="23" fill="#fbfbfb" stroke="#a0a0a0" /><rect width="24" height="4" fill="#4b86b8" /><path d="M3 15l6-3l5-7l6 13l-5-2l-4 5l-3-4z" fill="#d4501c" /><path d="M3 15l6-3l3-4l-2 8l-2 1z" fill="#2c73b0" /><path d="M14 5l2 9l-4 6l-1-4z" fill="#f3a33a" /></svg>
      <h3>Scope</h3>
      <WinButton aria-label="最小化"><svg width="15" height="15"><path d="M0 7.500H15" stroke="#000" /></svg></WinButton>
      <WinButton aria-label="最大化"><svg width="15" height="15"><rect x=".75" y=".75" width="13.500" height="13.500" rx="1.500" fill="none" stroke="#000" strokeWidth="1.500" /></svg></WinButton>
      <WinButton aria-label="关闭"><CloseX s={16} c="#000" w={1.2} /></WinButton>
    </WinTitle>
    <MenuBar>
      {[["文件", "F"], ["工具", "T"], ["视图", "V"], ["仿真", "I"], ["帮助", "H"]].map(([n, k]) => <button key={k}>{n}(<u>{k}</u>)</button>)}
      <svg width="11" height="9" viewBox="0 0 11 9"><path d="M1 1q5 0 7 5" fill="none" stroke="#000" strokeWidth="2" /><path d="M11 2v7H4z" /></svg>
    </MenuBar>
    <WinTools>
      <Tool aria-label="配置属性" $w={33}><Gear size={23} light /></Tool><Tool aria-label="配置菜单" $w={16}><ToolCaret /></Tool>
      <ToolSep />
      <Tool aria-label="步退" $w={33}><svg width="24" height="24" viewBox="0 0 24 24"><path d="M15 1v13L1 9z" fill="url(#gBlue)" stroke="#3f74a3" /><path d="M18 1v8" stroke="#3f74a3" strokeWidth="2" /><circle cx="15" cy="15" r="6" fill="#ddd" stroke="#666" strokeWidth="3" /><circle cx="15" cy="15" r="2" fill="#fff" stroke="#444" /></svg></Tool>
      <Tool aria-label="运行" $w={34}><Play size={26} /></Tool>
      <Tool aria-label="步进" $w={34}><svg width="20" height="20" viewBox="0 0 20 20"><rect x="1" y="1" width="3.500" height="18" fill="url(#gBlue)" stroke="#3f74a3" /><path d="M8 1v18l11-9z" fill="url(#gBlue)" stroke="#3f74a3" strokeWidth="1.500" /></svg></Tool>
      <Tool aria-label="停止" $w={34}><svg width="25" height="25" viewBox="0 0 25 25"><circle cx="12.500" cy="12.500" r="12" fill="#a5a5a5" /><rect x="8" y="8" width="9" height="9" fill="#858585" /></svg></Tool>
      <ToolSep />
      <Tool aria-label="突出显示" $w={34}><svg width="25" height="24" viewBox="0 0 25 24" strokeWidth="1.500"><path d="M13 5h5v5M13 19h5v-5" fill="none" stroke="#777" /><rect x="2" y="1" width="11" height="8" fill="#f28a2e" stroke="#c65f0e" /><rect x="2" y="15" width="10" height="7" fill="#f8f8f8" stroke="#777" /><circle cx="19" cy="12" r="3.500" fill="#f8f8f8" stroke="#777" /></svg></Tool><Tool aria-label="突出显示菜单" $w={16}><ToolCaret /></Tool>
      <ToolSep />
      <Tool aria-label="放大"><Lens size={22} dark /></Tool><Tool aria-label="缩放菜单" $w={16}><ToolCaret /></Tool>
      <ToolSep />
      <Tool aria-label="缩放轴"><svg width="24" height="24" viewBox="0 0 24 24"><rect x="1" y="1" width="22" height="22" fill="url(#gPage)" stroke="#555" strokeWidth="1.600" /><path d="M12 3v7M12 21v-7" stroke="#333" strokeWidth="1.500" /><path d="M12 2l4 5H8zM12 22l4-5H8z" fill="#333" /></svg></Tool><Tool aria-label="轴菜单" $w={16}><ToolCaret /></Tool>
      <ToolSep />
      <Tool aria-label="触发"><svg width="22" height="23" viewBox="0 0 22 23"><path d="M2 21h9V3h9" fill="none" stroke="#444" strokeWidth="4" /><path d="M3 14l8-8l6 8z" fill="#444" /></svg></Tool>
      <Tool aria-label="测量" $w={38}><svg width="24" height="24" viewBox="0 0 24 24"><rect x="1" y="1" width="22" height="22" fill="url(#gPage)" stroke="#555" strokeWidth="1.600" /><path d="M4 19L17 3l5 4L9 22z" fill="#a8cfec" stroke="#4a7fa8" strokeWidth="1.500" /><path d="M8 15l2 2M11 11l2 2M14 8l2 2" stroke="#2a5a80" /></svg></Tool><Tool aria-label="测量菜单" $w={14}><ToolCaret /></Tool>
    </WinTools>
    <Plots>
      <Axes h={118} range={1.25} ticks={[1, 0, -1]} f={Math.sin} />
      <Axes h={118} range={0.25} ticks={[0.2, 0, -0.2]} f={noise} />
      <Axes h={118} range={1.5} ticks={[1, 0, -1]} f={(t) => Math.sin(t) + noise(t)} />
      <Axes h={103} range={1.5} ticks={[1, 0, -1]} f={(t) => (Math.sin(t) - Math.cos(t) + Math.exp(-t)) / 2} showTime />
      <MaxAxes aria-label="最大化坐标区"><svg width="19" height="15" viewBox="0 0 19 15"><rect x="1" y="1" width="17" height="13" fill="#333" stroke="#fff" strokeWidth="2" /><path d="M4 4h11M9.500 13V7" stroke="#fff" strokeWidth="1.500" /><path d="M9.500 5l4 5h-8z" fill="#fff" /></svg></MaxAxes>
    </Plots>
    <WinStatus><span>就绪</span><StatusCell>基于采样</StatusCell><StatusCell>T=10.000</StatusCell></WinStatus>
  </Window>
);

/* ---------- ribbon content ---------- */
const designItems = [
  ["模型数据\n编辑器", <DataEditorIcon />],
  ["模型资源\n管理器", <ResourceIcon />],
  ["调度编辑器", <ScheduleIcon />],
];
const componentItems = [
  ["创建子系统", <SubIcon kind="sub" />],
  ["原子子系统", <SubIcon kind="sub" atomic />],
  ["使能子系统", <SubIcon kind="enable" />],
  ["触发子系统", <SubIcon kind="trigger" />],
  ["函数调用子系\n统", <SubIcon kind="func" />],
  ["使用区域分组", <SubIcon kind="region" />],
  ["添加 Bus\nCreator", <BusIcon />, true],
];
const GalleryOf = ({ items }) => (
  <Gallery>
    {items.map(([name, icon, off]) => <GalleryItem key={name} disabled={off}>{icon}<span>{name}</span></GalleryItem>)}
    <GalleryMore aria-label="更多"><Caret /></GalleryMore>
  </Gallery>
);

export default function App() {
  return (
    <App_>
      <Global />
      <Defs />
      <TitleBar>
        <TitleTabs>
          <TitleTab>仿真</TitleTab>
          <TitleTab>调试</TitleTab>
          <TitleTab $active>建模</TitleTab>
          <TitleTab>格式</TitleTab>
          <TitleTab>APP</TitleTab>
          <TitleTab $context>示波器</TitleTab>
        </TitleTabs>
        <QuickBar>
          <QuickButton aria-label="保存"><SaveIcon /></QuickButton>
          <QuickButton aria-label="撤销"><UndoIcon /></QuickButton>
          <QuickButton aria-label="重做"><UndoIcon redo /></QuickButton>
          <QuickButton aria-label="搜索"><Lens size={24} /></QuickButton>
          <QuickButton aria-label="收藏"><FavIcon /></QuickButton>
          <QuickButton aria-label="收藏菜单" $narrow><Caret c="#000" /></QuickButton>
          <QuickButton aria-label="帮助"><HelpIcon /></QuickButton>
          <QuickButton aria-label="帮助菜单" $narrow><Caret c="#000" /></QuickButton>
          <QuickButton aria-label="选项"><CircleDown /></QuickButton>
        </QuickBar>
      </TitleBar>

      <Ribbon>
        <Group>
          <GroupBody>
            <LargeButton $w={96}><CheckIcon /><span>模型顾问</span><Caret /></LargeButton>
            <SmallColumn>
              <SmallButton $gap={14}><Lens /><span>查找</span><Caret /></SmallButton>
              <SmallButton><CompareIcon /><span>比较项</span></SmallButton>
              <SmallButton><SlidersIcon /><span>环境</span><Caret /></SmallButton>
            </SmallColumn>
          </GroupBody>
          <GroupLabel>评估和管理</GroupLabel>
        </Group>
        <Divider />
        <Group $pad="0 5px 0 4px">
          <GroupBody><GalleryOf items={designItems} /></GroupBody>
          <GroupLabel>设计</GroupLabel>
        </Group>
        <Divider />
        <Group>
          <GroupBody><LargeButton $w={113}><Gear size={34} /><span>模型设置</span><Caret /></LargeButton></GroupBody>
          <GroupLabel>设置</GroupLabel>
        </Group>
        <Divider />
        <Group $pad="0 5px 0 4px">
          <GroupBody><GalleryOf items={componentItems} /></GroupBody>
          <GroupLabel>组件</GroupLabel>
        </Group>
        <Divider />
        <Group>
          <GroupBody><LargeButton $w={95}><UpdateIcon /><span>更新模型</span><Caret /></LargeButton></GroupBody>
          <GroupLabel>编译</GroupLabel>
        </Group>
        <Divider />
        <Group $pad="0 5px 0 0">
          <GroupBody>
            <Fields>
              <FieldRow $spread><label htmlFor="stop">停止时间</label><StopInput id="stop" defaultValue="10.0" /></FieldRow>
              <ModeBox><select aria-label="仿真模式"><option>普通</option></select><Caret w={12} h={7} /></ModeBox>
              <FieldRow as="button"><RestartIcon /><span>快速重启</span></FieldRow>
            </Fields>
            <LargeButton $w={96}><Play /><span>运行</span><Caret /></LargeButton>
            <LargeButton $w={74} disabled><StopIcon /><span>停止</span></LargeButton>
          </GroupBody>
          <GroupLabel>仿真</GroupLabel>
        </Group>
        <Divider />
        <RibbonEnd><button aria-label="折叠"><CollapseIcon /></button></RibbonEnd>
      </Ribbon>

      <Main>
        <SideStrip><SideTab $flip>模型浏览器</SideTab></SideStrip>
        <Library>
          <LibraryHead>
            <h2>库浏览器</h2>
            <button aria-label="面板菜单"><CircleDown size={19} c="#6f6f6f" bg="#f5f5f5" /></button>
            <button aria-label="关闭面板"><CloseX /></button>
          </LibraryHead>
          <SearchRow>
            <Combo>
              <input aria-label="搜索库" defaultValue="add" />
              <svg width="11" height="7" viewBox="0 0 11 7"><path d="M.5 .5l5 5l5-5" fill="none" stroke="#555" /></svg>
            </Combo>
            <FramedButton aria-label="搜索" $w={28} $ml={12} $r="4px 0 0 4px"><SearchAIcon /></FramedButton>
            <FramedButton aria-label="搜索选项" $w={19} $ml={-1} $r="0 4px 4px 0"><Caret c="#000" /></FramedButton>
            <FramedButton aria-label="列表" $w={28} $ml={30}><ListIcon /></FramedButton>
            <FramedButton aria-label="网格" $w={28} $ml={3}><GridIcon /></FramedButton>
          </SearchRow>
          <LibTabs role="tablist">
            <button role="tab" aria-selected="true">库</button>
            <button role="tab" aria-selected="false">搜索结果</button>
          </LibTabs>
          <LibBody>
            <LibList>
              <LibItems>
                {libItems.map(([name, lines, icon], i) => (
                  <LibItem key={name} $lines={lines} $selected={i === 0}>{icon}<span>{name}</span></LibItem>
                ))}
                {libNodes.map((n) => (
                  <LibNode key={n}><svg width="8" height="14" viewBox="0 0 8 14"><path d="M0 0L8 7L0 14Z" /></svg>{n}</LibNode>
                ))}
              </LibItems>
              <ScrollTrack><ScrollThumb /></ScrollTrack>
            </LibList>
          </LibBody>
        </Library>

        <Editor>
          <NavRow>
            <NavButton aria-label="后退"><NavArrow r={0} /></NavButton>
            <NavButton aria-label="前进"><NavArrow r={180} /></NavButton>
            <NavButton aria-label="上一级"><NavArrow r={90} /></NavButton>
            <DocTab>eg3</DocTab>
            <KeyboardButton aria-label="键盘快捷方式"><KeyboardIcon /></KeyboardButton>
          </NavRow>
          <EditorBody>
            <Palette>
              <PaletteButton aria-label="隐藏"><svg width="17" height="17" viewBox="0 0 17 17"><circle cx="8.500" cy="8.500" r="7.500" fill="#e8e8e8" stroke="#808080" strokeWidth="2" /><path d="M14 8.500H6M8.500 4.500l-4 4l4 4" fill="none" stroke="#333" strokeWidth="2.200" /></svg></PaletteButton>
              <hr />
              {paletteTop.map(([n, icon]) => <PaletteButton key={n} aria-label={n}>{icon}</PaletteButton>)}
              <Spacer />
              {paletteBottom.map(([n, icon]) => <PaletteButton key={n} aria-label={n}>{icon}</PaletteButton>)}
            </Palette>
            <CanvasFrame>
              <AddressBar>
                <Address><ModelIcon /><span>eg3</span><Caret w={14} h={8} c="#000" /></Address>
              </AddressBar>
              <Canvas>
                <Model />
                <ScopeWindow />
              </Canvas>
            </CanvasFrame>
          </EditorBody>
        </Editor>
        <SideStrip $right><SideTab>属性检查器</SideTab></SideStrip>
      </Main>

      <StatusBar><span>就绪</span><span>200%</span><a href="#solver">auto(ode3)</a></StatusBar>
      <Watermark>CSDN @水瓶小小</Watermark>
    </App_>
  );
}
